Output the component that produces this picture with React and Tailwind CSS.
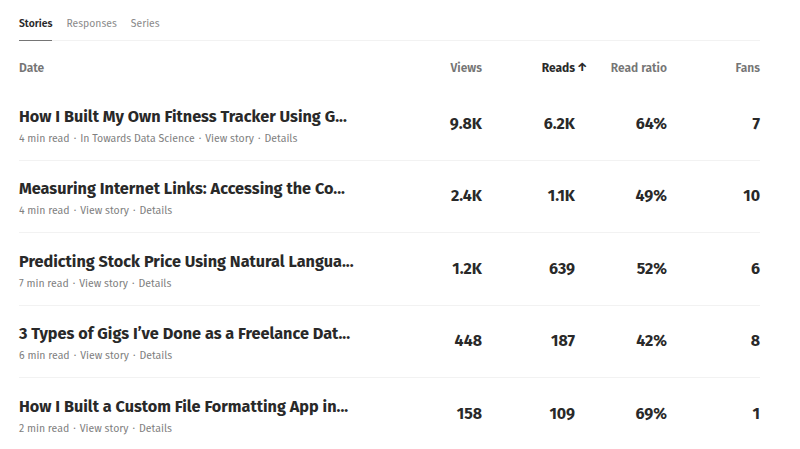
import React from "react";

const rows = [
  { t: "How I Built My Own Fitness Tracker Using G...", m: ["4 min read", "In Towards Data Science", "View story", "Details"], v: "9.8K", r: "6.2K", ratio: "64%", f: "7" },
  { t: "Measuring Internet Links: Accessing the Co...", m: ["4 min read", "View story", "Details"], v: "2.4K", r: "1.1K", ratio: "49%", f: "10" },
  { t: "Predicting Stock Price Using Natural Langua...", m: ["7 min read", "View story", "Details"], v: "1.2K", r: "639", ratio: "52%", f: "6" },
  { t: "3 Types of Gigs I’ve Done as a Freelance Dat...", m: ["6 min read", "View story", "Details"], v: "448", r: "187", ratio: "42%", f: "8" },
  { t: "How I Built a Custom File Formatting App in...", m: ["2 min read", "View story", "Details"], v: "158", r: "109", ratio: "69%", f: "1" },
];

export default function App() {
  return (
    <div className="w-[800px] h-[449px] bg-white overflow-hidden text-[#292929]" style={{ fontFamily: '"Fira Sans", "Lato", "Open Sans", sans-serif' }}>
      <div className="ml-[19px] w-[741px]">
        <div className="flex gap-[14px] pt-[17px] border-b border-[#f2f2f2] text-[10.4px] leading-[14px]">
          <div className="font-semibold text-[#292929] border-b border-[#757575] pb-[9px] -mb-px">Stories</div>
          <div className="text-[#8a8a8a]">Responses</div>
          <div className="text-[#8a8a8a]">Series</div>
        </div>
        <div className="grid grid-cols-[370px_93px_93px_92px_93px] items-start h-[47px] pt-[19px] text-[12px] leading-[16px] text-[#757575] font-semibold">
          <div>Date</div>
          <div className="text-right">Views</div>
          <div className="text-right relative">
            <span className="text-[#292929] font-bold">Reads</span>
            <span className="absolute left-full top-[-1px] ml-[2px] text-[#292929] font-bold">↑</span>
          </div>
          <div className="text-right">Read ratio</div>
          <div className="text-right">Fans</div>
        </div>
        {rows.map((row, i) => (
          <div key={i} className={`grid grid-cols-[370px_93px_93px_92px_93px] items-center h-[72.5px] ${i < rows.length - 1 ? "border-b border-[#f2f2f2]" : ""}`}>
            <div className="self-start pt-[17.5px]">
              <div className="text-[16.25px] font-bold leading-[22px] text-[#292929] whitespace-nowrap">{row.t}</div>
              <div className="text-[10.5px] text-[#808080] leading-[16px] mt-[3px]">
                {row.m.map((x, j) => (
                  <span key={j}>{j > 0 && <span className="mx-[4px]">·</span>}{x}</span>
                ))}
              </div>
            </div>
            <div className="text-right text-[16px] font-bold">{row.v}</div>
            <div className="text-right text-[16px] font-bold">{row.r}</div>
            <div className="text-right text-[16px] font-bold">{row.ratio}</div>
            <div className="text-right text-[16px] font-bold">{row.f}</div>
          </div>
        ))}
      </div>
    </div>
  );
}
